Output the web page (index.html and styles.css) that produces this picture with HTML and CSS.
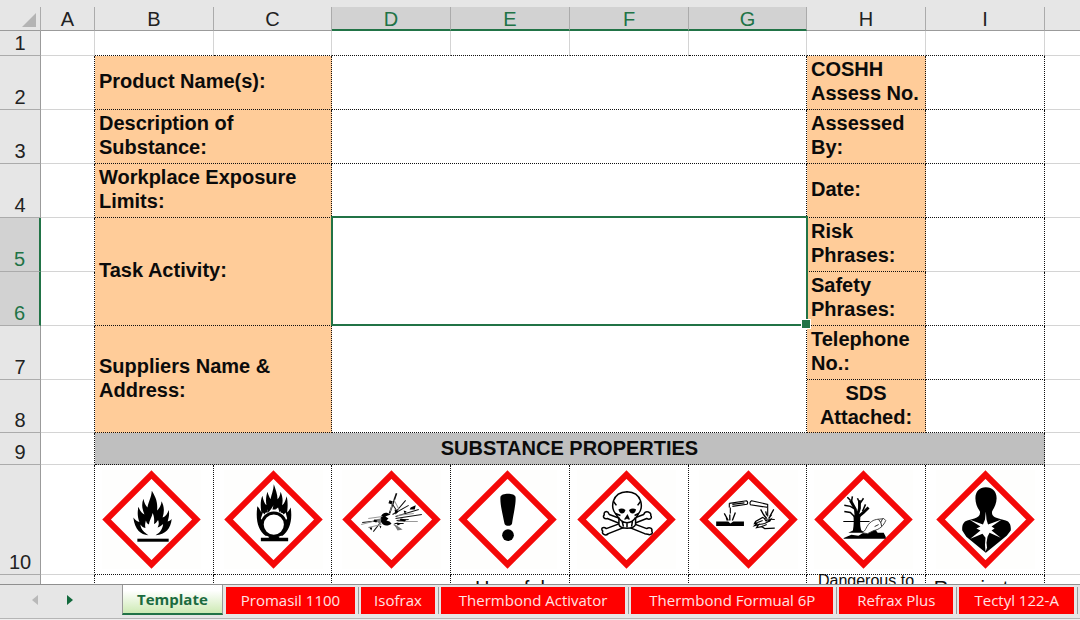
FILE: index.html
```html
<!DOCTYPE html>
<html lang="en">
<head>
<meta charset="utf-8">
<title>COSHH Assessment</title>
<link rel="stylesheet" href="styles.css">
</head>
<body>
<main class="sheet">
<table class="grid">
<colgroup>
<col class="col-head"><col class="col-a"><col class="col-wide"><col class="col-std"><col class="col-wide"><col class="col-wide"><col class="col-wide"><col class="col-std"><col class="col-wide"><col class="col-wide"><col>
</colgroup>
<thead>
<tr class="letters">
<th class="corner"><button class="select-all" aria-label="Select all"><svg width="14" height="14" viewBox="0 0 14 14"><path d="M14 0V14H0Z" fill="#b4b4b4"/></svg></button></th>
<th>A</th><th>B</th><th>C</th><th class="picked">D</th><th class="picked">E</th><th class="picked">F</th><th class="picked">G</th><th>H</th><th>I</th><th></th>
</tr>
</thead>
<tbody>
<tr class="row-first"><th>1</th><td></td><td class="over-form"></td><td class="over-form"></td><td class="over-form"></td><td class="over-form"></td><td class="over-form"></td><td class="over-form"></td><td class="over-form"></td><td class="over-form"></td><td></td></tr>
<tr class="row"><th>2</th><td class="side"></td><td class="form label" colspan="2">Product Name(s):</td><td class="form" colspan="4"></td><td class="form label">COSHH Assess No.</td><td class="form"></td><td></td></tr>
<tr class="row"><th>3</th><td class="side"></td><td class="form label" colspan="2">Description of<br>Substance:</td><td class="form" colspan="4"></td><td class="form label">Assessed By:</td><td class="form"></td><td></td></tr>
<tr class="row"><th>4</th><td class="side"></td><td class="form label" colspan="2">Workplace Exposure Limits:</td><td class="form" colspan="4"></td><td class="form label">Date:</td><td class="form"></td><td></td></tr>
<tr class="row"><th class="picked">5</th><td class="side"></td><td class="form label" colspan="2" rowspan="2">Task Activity:</td><td class="form active" colspan="4" rowspan="2"><span class="selection"></span></td><td class="form label">Risk Phrases:</td><td class="form plain-bottom"></td><td></td></tr>
<tr class="row"><th class="picked">6</th><td class="side"></td><td class="form label">Safety Phrases:</td><td class="form"></td><td></td></tr>
<tr class="row"><th>7</th><td class="side"></td><td class="form label" colspan="2" rowspan="2">Suppliers Name &amp; Address:</td><td class="form" colspan="4" rowspan="2"></td><td class="form label">Telephone No.:</td><td class="form"></td><td></td></tr>
<tr class="row-eight"><th>8</th><td class="side"></td><td class="form label centered">SDS Attached:</td><td class="form"></td><td></td></tr>
<tr class="row-title"><th>9</th><td class="side"></td><td class="form section" colspan="8">SUBSTANCE PROPERTIES</td><td></td></tr>
<tr class="row-signs"><th>10</th><td class="side"></td>
<td class="form sign near">
<svg class="pictogram" viewBox="0 0 98 98" role="img" aria-label="Flammable"><path class="frame" d="M49 4.500 93.500 49 49 93.500 4.500 49Z"/>
<path d="M46 64.500C38 64 32.500 59 31 47C33.500 50 35 51 37 51.500C35 46 35 42 36 36.500C38 41 39.500 43 42 44C39.500 38 39 34 41 28.500C42 33 43 35 45 37C46 31 49 27 49.300 20.500C52.500 26 55.500 31 54.500 40C57 38 58.500 35 59 31C61.500 36 62 41 60 47C63 46 65 43 66 39.500C67 44 66 47 65 51C67 50.500 68 49.500 69 48.500C68 58 63 64 53 64.500C58 62 60 58 60.500 53.500C58.500 55.500 57 56.500 55 57C56.500 54 56.500 52 55.500 49.500C54 52 53 53 51.500 53.500C52 49 51.500 45 50 42.500C49.500 47 47 49 46.500 54C44.500 53 44 52 43.500 50C42.500 53 42.500 55 43 57.500C40.500 57 39 55.500 38 54C38.500 59 42 62 46 64.500Z"/><path d="M35 68H66V71H35Z"/></svg></td>
<td class="form sign">
<svg class="pictogram" viewBox="0 0 98 98" role="img" aria-label="Oxidising"><path class="frame" d="M49 4.500 93.500 49 49 93.500 4.500 49Z"/>
<path d="M41 65C34 60 31 50 33 36C35 38 36 40 37 42C36 36 36 30 38 25.500C39 30 40 33 42 35C41 29 42 25 43 21.500C44 25 45 27 46 29C47 24 49 20 49.300 14C51 19 53 24 53 29C55 27 55.500 25 56 21.500C58 26 58.500 30 57.500 35C60 33 61 30 62 26C63.500 32 63 37 62.500 42C64 41 65 39 66 37C68 50 65 60 58 65Z"/><path class="paper" d="M36.500 48 38.500 42 40 44 43 39 44 42 47 38 49 35 51 39 53.500 37 55 42 57 40 59 44 61 42 62.500 48 61 50C57 42 42 42 38 50Z"/><circle cx="49.300" cy="54" r="11.500" fill="#fff" stroke="#000" stroke-width="3"/><path d="M40.500 42 42.500 36 43.500 42ZM48 39 49.500 32 51 39ZM56 42 57.500 36 59 43Z"/><path d="M36.500 67H44L46 65H53L55 67H63.500V70.500H36.500Z"/></svg></td>
<td class="form sign">
<svg class="pictogram" viewBox="0 0 98 98" role="img" aria-label="Explosive"><path class="frame" d="M49 4.500 93.500 49 49 93.500 4.500 49Z"/>
<path d="M48 44C42 40 37 44 38.500 51C40 56 46 56 49 53L47 51 44 50 46 48 43 46Z"/><g fill="none" stroke="#111" stroke-width="1"><path stroke-width="1.600" d="M47 43 54 23"/><path d="M48 31 54 40M52 43 63 30M50 44 66 35M53 46 76 39M53 48 79 44M54 50 66 49M52 53 61 53M38 50 20 52M38 52 31 61"/></g><g fill="none" stroke="#999" stroke-width="1"><path d="M51 29 56 38M55 45 71 43M55 51 75 51M40 46 26 48M38 49 19 54M39 54 26 57M51 54 58 59M48 41 50 31"/></g><path fill="#777" d="M51 53 60 59 55 60ZM32 49 39 48 38 54Z"/><path d="M47 30 50 31 49 34 46 33ZM68 37 73 35 72 39 67 39ZM58 48 64 49 62 51 57 50ZM52 39 56 41 53 44ZM32 49 35 50 34 52 31 51ZM27 57 30 57 29 60ZM37 55 39 56 38 58ZM54 52 59 53 55 55ZM61 40 64 41 62 43Z"/></svg></td>
<td class="form sign near">
<svg class="pictogram" viewBox="0 0 98 98" role="img" aria-label="Harmful"><path class="frame" d="M49 4.500 93.500 49 49 93.500 4.500 49Z"/>
<path d="M42 27C42.500 22.500 56.500 22.500 57 27C57.500 34 54.500 45 53.500 53C53 56 46.500 56 46 53C44.500 45 41.500 34 42 27Z"/><circle cx="49.500" cy="64.500" r="5.800"/></svg></td>
<td class="form sign near">
<svg class="pictogram" viewBox="0 0 98 98" role="img" aria-label="Toxic"><path class="frame" d="M49 4.500 93.500 49 49 93.500 4.500 49Z"/>
<g fill="#fff" stroke="#000" stroke-width="1.500" stroke-linejoin="round"><path d="M32 44 69 58C72 56 75 58 74 60.500C76 63 72 65 70 63.500L67 63 30 48C27 49 25 46 27 44.500C26 41 30 39.500 32 44Z"/><path d="M66 44 29 58C26 55.500 23 58 25.500 60.500C24 63 28 66 31 63L69 48C72 50 75 47.500 73 45C74 42 68 39 66 44Z"/><path d="M38 43C33 38 34 22 49.500 21.500C65 22 66 38 61 43L58 48V54C56 59 43 59 41.500 54V48Z"/><path fill="none" d="M41 47C45 54 54 54 58 47M44.500 50 46 56M49.500 52V57M55 50 54 56M36 31 39 35M63 31 60 35M38 43 43 45M61 43 57 45"/></g><path d="M41 39Q44.500 37 48 39.500Q47 43 44.500 43Q42 43 41 39ZM51.500 39.500Q55 37 58.500 39Q57.500 43 55 43Q52.500 43 51.500 39.500ZM50 43.500 52.500 49H50.500L49.500 48 48.500 49H46.500Z"/></svg></td>
<td class="form sign">
<svg class="pictogram" viewBox="0 0 98 98" role="img" aria-label="Corrosive"><path class="frame" d="M49 4.500 93.500 49 49 93.500 4.500 49Z"/>
<g fill="none" stroke="#000" stroke-width="1.100"><path d="M30 33 47 30.500Q49 32 47.500 34L33 36M30 33V37M52 30.500 68 34V37L51 34.500Q49.500 32 52 30.500ZM31 37V43M68 37V46M33 34 45 32.500"/></g><g fill="none" stroke="#000" stroke-width="1.300"><path d="M25 43 29 50M30.500 44V50M36 42 33 50M27 47 28 50M61 39 65 46M63 43 67 48M74 39 70 46M72 44 69 48M66 41 67 45"/></g><path d="M17 51H29L31 53 34 51H44.500V55.500H17Z"/><path d="M75 49 66 48.500 63 47 56 51 55 53 58 52 55 55 59 54 57 57 62 56 65 58 75 57.500" fill="#fff" stroke="#000" stroke-width="1.200"/><path d="M58 52 63 50M59 54 65 53 71 50M62 56 67 54" fill="none" stroke="#000"/><path d="M64 48 68 50 73 47 70 51 66 51Z"/></svg></td>
<td class="form sign near">
<svg class="pictogram" viewBox="0 0 98 98" role="img" aria-label="Dangerous to the environment"><path class="frame" d="M49 4.500 93.500 49 49 93.500 4.500 49Z"/>
<path d="M38.500 60C39.500 54 39.500 50 39 45H46C45.500 52 45.500 56 47 60L51 62 34 62Z"/><g fill="none" stroke="#000"><path stroke-width="2.800" d="M42 50 41 39 36 30M42 48 45 38V30M43 47 49 42 54 37"/><path stroke-width="1.500" d="M41 39 36 36 30 35M40 46 36 42 30 41M36 30 33 27M37 32 38 26M45 34 49 28M45 32 43 28M48 41 51 34"/><path stroke-width="1" d="M29 51H55"/></g><path d="M30 67 37 64 44 65 51 61 58 60 60 58 63 62 69 62 71 66 71 68 29 68Z"/><path d="M47 62C52 61 51 55 57 51C61 48 66 49 69 48L71 50C69 55 65 59 59 60L53 63Z" fill="#fff" stroke="#333" stroke-width=".9"/><path d="M64 49Q67 52 67 56M60 56 64 54M68 48 66 52" fill="none" stroke="#000" stroke-width=".8"/></svg></td>
<td class="form sign">
<svg class="pictogram" viewBox="0 0 98 98" role="img" aria-label="Respiratory hazard"><path class="frame" d="M49 4.500 93.500 49 49 93.500 4.500 49Z"/>
<path d="M49.300 17C56 17 60 21 60 28C60 34 57 38 55.500 41C55 45 57 47 62 48L69 50C73 51 74.500 55 74 60L70 65 49.300 82 30 66 26 60C25.500 55 27 51 31 50L38 48C42 47 44 45 43.500 41C41.500 38 39 34 39 28C39 21 43 17 49.300 17Z"/><path class="paper" d="M49.300 41 50 49 51.500 54 65 49 55 56 58 58 55 60 64 67 53 62 51 66 50 72 50.500 77 49 81 48.500 74 49 67 46 63 34 68 44 60 40 58 44 56 33 49 46.500 54 48.500 49Z"/></svg></td>
<td></td></tr>
<tr class="row"><th></th><td class="side"></td><td class="form caption"></td><td class="form caption"></td><td class="form caption"></td><td class="form caption">Harmful</td><td class="form caption"></td><td class="form caption"></td><td class="form caption small">Dangerous to</td><td class="form caption">Respiratory</td><td></td></tr>
</tbody>
</table>
</main>
<nav class="tabs" aria-label="Worksheets">
<div class="arrows">
<button aria-label="Previous sheets" disabled><svg width="6" height="10" viewBox="0 0 6 10"><path d="M6 0V10L0 5Z" fill="#b9b9b9"/></svg></button>
<button aria-label="Next sheets"><svg width="6" height="10" viewBox="0 0 6 10"><path d="M0 0V10L6 5Z" fill="#12693c"/></svg></button>
</div>
<button class="tab current">Template</button>
<button class="tab">Promasil 1100</button>
<button class="tab snug">Isofrax</button>
<button class="tab roomy">Thermbond Activator</button>
<button class="tab roomy">Thermbond Formual 6P</button>
<button class="tab roomy">Refrax Plus</button>
<button class="tab">Tectyl 122-A</button>
</nav>
</body>
</html>
```
FILE: styles.css
```css
* { box-sizing: border-box; }

body {
  margin: 0;
  height: 100vh;
  display: flex;
  flex-direction: column;
  background: #e6e6e6;
  color: #0b0b0b;
  font: 20px/24px "Liberation Sans", Arial, sans-serif;
}

button { font: inherit; border: 0; padding: 0; background: none; }
svg { display: block; }

.sheet { flex: 1; min-height: 0; overflow: hidden; padding-top: 7px; }

.grid { width: 100%; table-layout: fixed; border-collapse: separate; border-spacing: 0; }
.col-head { width: 41px; }
.col-a { width: 54px; }
.col-wide { width: 119px; }
.col-std { width: 118px; }

.letters { height: 24px; }
.row-first { height: 25px; }
.row { height: 54px; }
.row-eight { height: 53px; }
.row-title { height: 32px; }
.row-signs { height: 110px; }

.grid th {
  padding: 0;
  font-weight: 400;
  color: #222;
  background: #e6e6e6;
  border-right: 1px solid #9b9b9b;
  border-bottom: 1px solid #ababab;
  vertical-align: bottom;
}
.grid .letters th { height: 24px; padding-top: 2px; line-height: 21px; border-right-color: #ababab; border-bottom-color: #9b9b9b; }
.grid .letters th:last-child { border-right: 0; }
.grid .picked { background: #d2d2d2; color: #217346; border-right: 2px solid #217346; }
.grid .letters .picked { border-right: 1px solid #ababab; border-bottom: 2px solid #217346; line-height: 20px; }
.select-all { display: block; margin-left: auto; padding: 0 4px 3px 0; }

.grid td {
  padding: 0;
  background: #fff;
  border-right: 1px solid #d4d4d4;
  border-bottom: 1px solid #d4d4d4;
}
.grid td:last-child { border-right: 0; }
.grid .over-form { border-bottom: 1px dotted #111; }
.grid .side { border-right: 1px dotted #111; }
.grid .form { border-right: 1px dotted #111; border-bottom: 1px dotted #111; }
.grid .plain-bottom { border-bottom: 1px solid #d4d4d4; }

.grid .label { padding: 0 4px 3px; background: #fc9; font-weight: 700; }
.grid .centered { text-align: center; }
.grid .section { padding-bottom: 2px; background: #bfbfbf; font-weight: 700; text-align: center; }

.active { position: relative; }
.selection { position: absolute; inset: -2px -2px -1px -1px; border: 2px solid #217346; }
.selection::after {
  content: "";
  position: absolute;
  right: -5px;
  bottom: -5px;
  width: 8px;
  height: 8px;
  background: #217346;
  border: 1px solid #fff;
}

.grid .sign { padding: 5px 0 0 10px; vertical-align: top; }
.grid .near { padding-left: 7px; }
.pictogram { width: 99px; height: 99px; background: #fefefd; }
.frame { fill: #fff; stroke: #f40808; stroke-width: 6; }
.paper { fill: #fff; }

.grid .caption { vertical-align: top; text-align: center; line-height: 26px; }
.grid .small { font-size: 16px; line-height: 12px; }

.tabs {
  display: flex;
  height: 36px;
  padding-bottom: 5px;
  border-top: 1px solid #8f8f8f;
  background: linear-gradient(#e6e6e6 33px, #b5b5b5 33px, #b5b5b5 34px, #eee 34px);
  overflow: hidden;
  white-space: nowrap;
  font: 15px/27px "Open Sans", "Noto Sans", sans-serif;
}
.arrows { display: flex; flex: 0 0 122px; align-items: center; gap: 29px; padding-left: 32px; }
.tab { position: relative; flex: none; height: 27px; margin: 2px 0 0 6px; padding: 0 15px; background: #f00; color: #ffe4e4; }
.tab::after { content: ""; position: absolute; top: 0; right: -4px; width: 1px; height: 27px; background: #999; }
.snug { padding: 0 13px; }
.roomy { padding: 0 18px; }
.current {
  height: 30px;
  margin: 0 -3px 0 0;
  padding: 0 14px;
  border: 1px solid #999;
  border-top: 0;
  border-bottom: 2px solid #217346;
  background: linear-gradient(#fff 20%, #cdeab4);
  color: #1b6b3f;
  font-weight: 700;
}
.current::after { content: none; }
```
